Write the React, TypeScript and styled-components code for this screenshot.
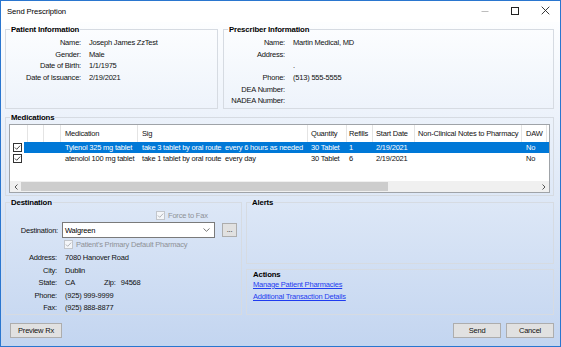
import React from "react";
import styled, { createGlobalStyle } from "styled-components";

const GlobalStyle = createGlobalStyle`
  * { box-sizing: border-box; }
  html, body { margin: 0; padding: 0; background: #ffffff; }
  body {
    font-family: "Liberation Sans", Arial, sans-serif;
    font-size: 7.5px;
    letter-spacing: -0.2px;
    color: #111;
  }
`;

const COLS = "18px 16px 17px 77px 170px 39px 26px 42px 107px 25px 1fr";

type Med = {
  name: string;
  sig: string;
  qty: string;
  refills: string;
  start: string;
  notes: string;
  daw: string;
  selected?: boolean;
};

const meds: Med[] = [
  {
    name: "Tylenol 325 mg tablet",
    sig: "take 3 tablet by oral route  every 6 hours as needed",
    qty: "30 Tablet",
    refills: "1",
    start: "2/19/2021",
    notes: "",
    daw: "No",
    selected: true,
  },
  {
    name: "atenolol 100 mg tablet",
    sig: "take 1 tablet by oral route  every day",
    qty: "30 Tablet",
    refills: "6",
    start: "2/19/2021",
    notes: "",
    daw: "No",
  },
];

const headers = [
  { t: "", pad: 0 },
  { t: "", pad: 0 },
  { t: "", pad: 0 },
  { t: "Medication", pad: 4 },
  { t: "Sig", pad: 4 },
  { t: "Quantity", pad: 3 },
  { t: "Refills", pad: 2 },
  { t: "Start Date", pad: 3 },
  { t: "Non-Clinical Notes to Pharmacy", pad: 3 },
  { t: "DAW", pad: 4 },
];

const Check = ({ disabled }: { disabled?: boolean }) => (
  <CheckBox viewBox="0 0 9 9">
    <rect
      x="0.5"
      y="0.5"
      width="8"
      height="8"
      fill={disabled ? "#f4f6f9" : "#fff"}
      stroke={disabled ? "#c2c6cc" : "#333"}
    />
    <path
      d="M1.9 4.5 L3.7 6.3 L7.2 2.6"
      fill="none"
      stroke={disabled ? "#a9adb3" : "#333"}
      strokeWidth="0.9"
    />
  </CheckBox>
);

const App = () => {
  return (
    <>
      <GlobalStyle />
      <Window>
        <TitleBar>
          <TitleText>Send Prescription</TitleText>
          <Controls>
            <Control>
              <svg width="8" height="8" viewBox="0 0 8 8">
                <path d="M0.5 4.5 H7.5" stroke="#bdbdbd" strokeWidth="1" />
              </svg>
            </Control>
            <Control>
              <svg width="8" height="8" viewBox="0 0 8 8">
                <rect x="0.5" y="0.5" width="7" height="7" fill="none" stroke="#222" />
              </svg>
            </Control>
            <Control>
              <svg width="9" height="9" viewBox="0 0 9 9">
                <path d="M0.7 0.7 L8.3 8.3 M8.3 0.7 L0.7 8.3" stroke="#222" strokeWidth="0.9" />
              </svg>
            </Control>
          </Controls>
        </TitleBar>

        <Body>
          <TopRow>
            <Group $width={213}>
              <Legend>Patient Information</Legend>
              <InfoGrid $label={71} $row={11.6}>
                <Label>Name:</Label>
                <Value>Joseph James ZzTest</Value>
                <Label>Gender:</Label>
                <Value>Male</Value>
                <Label>Date of Birth:</Label>
                <Value>1/1/1975</Value>
                <Label>Date of Issuance:</Label>
                <Value>2/19/2021</Value>
              </InfoGrid>
            </Group>
            <Group>
              <Legend>Prescriber Information</Legend>
              <InfoGrid $label={57} $row={11.6} $bottom={1}>
                <Label>Name:</Label>
                <Value>Martin Medical, MD</Value>
                <Label>Address:</Label>
                <Value></Value>
                <Label></Label>
                <Value>.</Value>
                <Label>Phone:</Label>
                <Value>(513) 555-5555</Value>
                <Label>DEA Number:</Label>
                <Value></Value>
                <Label>NADEA Number:</Label>
                <Value></Value>
              </InfoGrid>
            </Group>
          </TopRow>

          <MedGroup>
            <Legend>Medications</Legend>
            <DataGrid>
              <HeadRow>
                {headers.map((h, i) => (
                  <HeadCell key={i} $pad={h.pad}>
                    {h.t}
                  </HeadCell>
                ))}
                <HeadFill />
              </HeadRow>
              {meds.map((m) => (
                <DataRow key={m.name} $selected={m.selected}>
                  <CheckCell>
                    <Check />
                  </CheckCell>
                  <Cell $pad={0} />
                  <Cell $pad={0} />
                  <Cell $pad={4}>{m.name}</Cell>
                  <Cell $pad={4}>{m.sig}</Cell>
                  <Cell $pad={3}>{m.qty}</Cell>
                  <Cell $pad={2}>{m.refills}</Cell>
                  <Cell $pad={3}>{m.start}</Cell>
                  <Cell $pad={3}>{m.notes}</Cell>
                  <Cell $pad={4}>{m.daw}</Cell>
                  <Cell $pad={0} />
                </DataRow>
              ))}
              <GridFill />
              <ScrollBar>
                <ScrollArrow>
                  <svg width="4" height="6" viewBox="0 0 4 6">
                    <path d="M3.5 0.5 L1 3 L3.5 5.5" fill="none" stroke="#555" />
                  </svg>
                </ScrollArrow>
                <Thumb />
                <Track />
                <ScrollArrow>
                  <svg width="4" height="6" viewBox="0 0 4 6">
                    <path d="M0.5 0.5 L3 3 L0.5 5.5" fill="none" stroke="#555" />
                  </svg>
                </ScrollArrow>
              </ScrollBar>
            </DataGrid>
          </MedGroup>

          <BottomRow>
            <Group $width={237}>
              <Legend>Destination</Legend>
              <ForceRow>
                <Check disabled />
                <span>Force to Fax</span>
              </ForceRow>
              <DestRow>
                <DestLabel>Destination:</DestLabel>
                <Combo>
                  <span>Walgreen</span>
                  <svg width="7" height="4" viewBox="0 0 7 4">
                    <path d="M0.5 0.5 L3.5 3.3 L6.5 0.5" fill="none" stroke="#555" strokeWidth="0.8" />
                  </svg>
                </Combo>
                <BrowseButton>...</BrowseButton>
              </DestRow>
              <PrimaryRow>
                <Check disabled />
                <span>Patient's Primary Default Pharmacy</span>
              </PrimaryRow>
              <InfoGrid $label={47} $row={12.5} $top={2.6}>
                <Label>Address:</Label>
                <Value>7080 Hanover Road</Value>
                <Label>City:</Label>
                <Value>Dublin</Value>
                <Label>State:</Label>
                <StateValue>
                  <StateCode>CA</StateCode>
                  <span>Zip:</span>
                  <ZipValue>94568</ZipValue>
                </StateValue>
                <Label>Phone:</Label>
                <Value>(925) 999-9999</Value>
                <Label>Fax:</Label>
                <Value>(925) 888-8877</Value>
              </InfoGrid>
            </Group>

            <RightColumn>
              <AlertsGroup>
                <Legend>Alerts</Legend>
                <AlertsBody />
              </AlertsGroup>
              <ActionsPanel>
                <ActionsTitle>Actions</ActionsTitle>
                <ActionLink href="#">Manage Patient Pharmacies</ActionLink>
                <ActionLink href="#">Additional Transaction Details</ActionLink>
              </ActionsPanel>
            </RightColumn>
          </BottomRow>

          <ButtonRow>
            <Button $w={52}>Preview Rx</Button>
            <Spacer />
            <Button $w={48}>Send</Button>
            <Button $w={48}>Cancel</Button>
          </ButtonRow>
        </Body>
      </Window>
    </>
  );
};

const Window = styled.div`
  width: 561px;
  height: 347px;
  border: 1px solid #2a76cf;
  display: flex;
  flex-direction: column;
  overflow: hidden;
  background: #fff;
`;

const TitleBar = styled.div`
  height: 21px;
  flex: none;
  display: flex;
  align-items: center;
  padding-left: 6px;
  background: #fff;
`;

const TitleText = styled.span`
  font-size: 7.7px;
  letter-spacing: -0.1px;
  color: #000;
`;

const Controls = styled.div`
  margin-left: auto;
  align-self: stretch;
  display: flex;
`;

const Control = styled.div`
  width: 30px;
  display: flex;
  align-items: center;
  justify-content: center;
  padding-bottom: 2px;
`;

const Body = styled.div`
  flex: 1;
  display: flex;
  flex-direction: column;
  padding: 3px 6px 0 4px;
  background: linear-gradient(to bottom, #fdfeff 0%, #c3d5f0 100%);
`;

const TopRow = styled.div`
  display: flex;
  gap: 5px;
`;

const Group = styled.fieldset<{ $width?: number }>`
  margin: 0;
  padding: 0 4px;
  min-width: 0;
  border: 1px solid #d6dbe2;
  ${({ $width }) => ($width ? `width: ${$width}px; flex: none;` : "flex: 1;")}
`;

const Legend = styled.legend`
  padding: 0 1px;
  font-weight: bold;
  font-size: 7.8px;
  letter-spacing: -0.15px;
  line-height: 9px;
  color: #000;
`;

const InfoGrid = styled.div<{ $label: number; $row: number; $top?: number; $bottom?: number }>`
  display: grid;
  grid-template-columns: ${({ $label }) => $label}px 1fr;
  grid-auto-rows: ${({ $row }) => $row}px;
  column-gap: 8px;
  align-items: center;
  padding-top: ${({ $top }) => $top ?? 3}px;
  padding-bottom: ${({ $bottom }) => $bottom ?? 0}px;
`;

const Label = styled.span`
  text-align: right;
  white-space: nowrap;
`;

const Value = styled.span`
  white-space: nowrap;
`;

const MedGroup = styled(Group)`
  flex: none;
  margin-top: 4.5px;
  padding-bottom: 2px;
`;

const DataGrid = styled.div`
  margin: 2px -1px 0;
  height: 69px;
  border: 1px solid #9fa3a8;
  background: #fff;
  display: flex;
  flex-direction: column;
`;

const HeadRow = styled.div`
  display: grid;
  grid-template-columns: ${COLS};
  height: 17px;
  flex: none;
`;

const HeadCell = styled.div<{ $pad: number }>`
  border-right: 1px solid #e4e4e4;
  padding-left: ${({ $pad }) => $pad}px;
  display: flex;
  align-items: center;
  white-space: nowrap;
  overflow: hidden;
`;

const HeadFill = styled.div``;

const DataRow = styled.div<{ $selected?: boolean }>`
  display: grid;
  grid-template-columns: ${COLS};
  height: 11px;
  flex: none;
  align-items: center;
  color: ${({ $selected }) => ($selected ? "#fff" : "#111")};
  background: ${({ $selected }) =>
    $selected ? "linear-gradient(to right, transparent 14px, #0078d7 14px)" : "transparent"};
`;

const Cell = styled.div<{ $pad: number }>`
  padding-left: ${({ $pad }) => $pad}px;
  line-height: 11px;
  white-space: pre;
  overflow: hidden;
`;

const CheckCell = styled.div`
  display: flex;
  align-items: center;
  padding-left: 3px;
`;

const CheckBox = styled.svg`
  width: 9px;
  height: 9px;
  flex: none;
  display: block;
`;

const GridFill = styled.div`
  flex: 1;
`;

const ScrollBar = styled.div`
  height: 11px;
  flex: none;
  display: flex;
  background: #f0f0f0;
`;

const ScrollArrow = styled.div`
  width: 11px;
  display: flex;
  align-items: center;
  justify-content: center;
`;

const Thumb = styled.div`
  width: 367px;
  margin: 1px 0;
  background: #cdcdcd;
`;

const Track = styled.div`
  flex: 1;
`;

const BottomRow = styled.div`
  margin-top: 1.5px;
  display: flex;
  gap: 4px;
`;

const ForceRow = styled.div`
  margin-top: 3.5px;
  height: 10px;
  display: flex;
  align-items: center;
  gap: 3px;
  padding-left: 146px;
  color: #8e9196;
`;

const DestRow = styled.div`
  margin-top: 2px;
  height: 16px;
  display: flex;
  align-items: center;
`;

const DestLabel = styled.span`
  width: 48px;
  margin-right: 4px;
  text-align: right;
`;

const Combo = styled.div`
  width: 153px;
  height: 16px;
  border: 1px solid #7a7a7a;
  background: #fff;
  display: flex;
  align-items: center;
  justify-content: space-between;
  padding: 0 4px 0 2px;
  color: #000;
`;

const BrowseButton = styled.div`
  margin-left: 7px;
  width: 15px;
  height: 14px;
  border: 1px solid #adadad;
  background: #e1e1e1;
  display: flex;
  align-items: flex-end;
  justify-content: center;
  padding-bottom: 3px;
  line-height: 6px;
`;

const PrimaryRow = styled.div`
  margin-top: 1px;
  height: 10px;
  display: flex;
  align-items: center;
  gap: 3px;
  padding-left: 54px;
  color: #8e9196;
`;

const StateValue = styled.span`
  display: flex;
  white-space: nowrap;
`;

const StateCode = styled.span`
  width: 39px;
`;

const ZipValue = styled.span`
  margin-left: 5px;
`;

const RightColumn = styled.div`
  flex: 1;
  display: flex;
  flex-direction: column;
  gap: 5px;
`;

const AlertsGroup = styled(Group)`
  flex: none;
`;

const AlertsBody = styled.div`
  height: 56px;
`;

const ActionsPanel = styled.div`
  flex: 1;
  border: 1px solid #d6dbe2;
  padding: 0 6px;
  display: flex;
  flex-direction: column;
  align-items: flex-start;
`;

const ActionsTitle = styled.div`
  font-weight: bold;
  font-size: 7.8px;
  letter-spacing: -0.15px;
  line-height: 9px;
  color: #000;
`;

const ActionLink = styled.a`
  line-height: 12px;
  color: #1f3cf0;
  text-decoration: underline;
`;

const ButtonRow = styled.div`
  margin-top: 8px;
  padding-left: 5px;
  display: flex;
  gap: 5px;
`;

const Spacer = styled.div`
  flex: 1;
`;

const Button = styled.button<{ $w: number }>`
  width: ${({ $w }) => $w}px;
  height: 15px;
  padding: 0;
  border: 1px solid #adadad;
  background: #e1e1e1;
  font-family: inherit;
  font-size: 7.5px;
  letter-spacing: -0.2px;
  color: #111;
`;

export default App;
